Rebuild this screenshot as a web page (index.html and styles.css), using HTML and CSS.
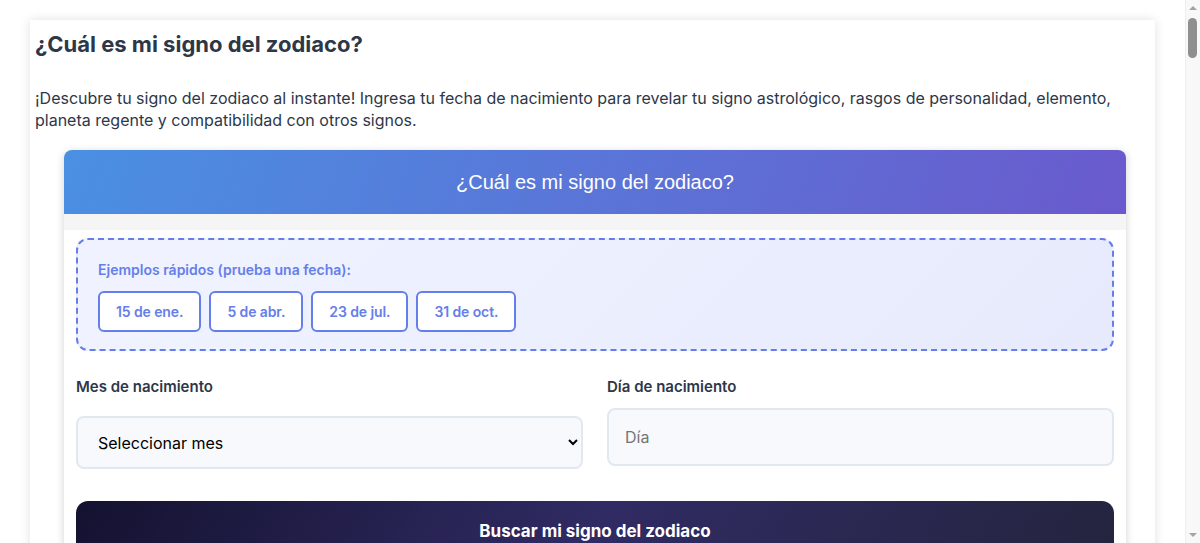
FILE: index.html
```html
<!DOCTYPE html>
<html lang="es">
<head>
    <meta charset="UTF-8">
    <meta name="viewport" content="width=device-width, initial-scale=1.0">
    <title>¿Cuál es mi signo del zodiaco?</title>
    <link rel="stylesheet" href="styles.css">
</head>
<body>
    <div class="page">
        <h1 class="page-title">¿Cuál es mi signo del zodiaco?</h1>
        <p class="intro">¡Descubre tu signo del zodiaco al instante! Ingresa tu fecha de nacimiento para revelar tu signo astrológico, rasgos de personalidad, elemento, planeta regente y compatibilidad con otros signos.</p>

        <div class="widget">
            <div class="widget-header">¿Cuál es mi signo del zodiaco?</div>
            <div class="widget-strip"></div>
            <div class="widget-body">
                <div class="examples">
                    <div class="examples-label">Ejemplos rápidos (prueba una fecha):</div>
                    <div class="examples-list">
                        <button class="chip">15 de ene.</button>
                        <button class="chip">5 de abr.</button>
                        <button class="chip">23 de jul.</button>
                        <button class="chip">31 de oct.</button>
                    </div>
                </div>

                <div class="form-row">
                    <div class="field">
                        <label class="field-label" for="month">Mes de nacimiento</label>
                        <select id="month" class="select">
                            <option>Seleccionar mes</option>
                            <option>Enero</option>
                            <option>Febrero</option>
                            <option>Marzo</option>
                        </select>
                    </div>
                    <div class="field">
                        <label class="field-label" for="day">Día de nacimiento</label>
                        <input id="day" class="input" type="number" placeholder="Día">
                    </div>
                </div>

                <button class="submit">Buscar mi signo del zodiaco</button>

                <div class="result">
                    <p>Selecciona tu mes y día de nacimiento para ver tu signo.</p>
                </div>
            </div>
        </div>
    </div>

    <!-- browser scrollbar as it shows in the capture -->
    <div class="scrollbar">
        <span class="scroll-arrow up"></span>
        <span class="scroll-thumb"></span>
        <span class="scroll-arrow down"></span>
    </div>
</body>
</html>
```

FILE: styles.css
```css
body {
    margin: 0;
    background: #ffffff;
    font-family: Inter, "Noto Sans", sans-serif;
    color: #2d3748;
}

.page {
    margin: 20px 45px 40px 30px;
    padding: 5px 5px 30px;
    background: #fff;
    box-shadow: 0 0 10px rgba(0, 0, 0, 0.12);
}

.page-title {
    font-size: 22px;
    font-weight: 700;
    margin: 5px 0 0;
    line-height: 28px;
}

.intro {
    font-size: 16px;
    line-height: 22px;
    margin: 29px 0 0;
}

.widget {
    width: 1062px;
    margin: 19px 0 0 29px;
    border-radius: 8px;
    overflow: hidden;
    background: #fff;
    box-shadow: 0 2px 8px rgba(0, 0, 0, 0.18);
}

.widget-header {
    height: 64px;
    display: flex;
    align-items: center;
    justify-content: center;
    background: linear-gradient(110deg, #4a90e2 0%, #6a5acd 100%);
    color: #fff;
    font-family: "Liberation Sans", Arial, sans-serif;
    font-size: 20px;
}

.widget-strip {
    height: 16px;
    background: #f5f5f5;
}

.widget-body {
    padding: 8px 12px 30px;
}

.examples {
    border: 2px dashed #667eea;
    border-radius: 12px;
    background: linear-gradient(135deg, #f0f3ff 0%, #e7eafc 100%);
    padding: 20px 20px 17px;
}

.examples-label {
    font-size: 14px;
    font-weight: 600;
    color: #667eea;
    line-height: 20px;
}

.examples-list {
    display: flex;
    gap: 8px;
    margin-top: 11px;
}

.chip {
    height: 41px;
    padding: 0 16px;
    border: 2px solid #667eea;
    border-radius: 6px;
    background: #fff;
    color: #667eea;
    font-family: Inter, sans-serif;
    font-size: 14px;
    font-weight: 600;
    letter-spacing: -0.1px;
}

.form-row {
    display: grid;
    grid-template-columns: 1fr 1fr;
    gap: 24px;
    margin-top: 26px;
}

.field {
    display: flex;
    flex-direction: column;
}

.field-label {
    font-size: 15px;
    font-weight: 600;
    color: #2d3748;
    line-height: 20px;
    margin-bottom: 11px;
}

.select {
    margin-top: 8px;
    height: 53px;
    padding: 0 14px 0 16px;
    border: 2px solid #e2e8f0;
    border-radius: 8px;
    background: #f7f9fc;
    font-family: Inter, sans-serif;
    font-size: 16px;
    color: #000;
}

.input {
    height: 58px;
    box-sizing: border-box;
    padding: 0 16px;
    border: 2px solid #e2e8f0;
    border-radius: 8px;
    background: #f7f9fc;
    font-family: Inter, sans-serif;
    font-size: 16px;
}

.input::placeholder {
    color: #757575;
}

.submit {
    display: block;
    width: 100%;
    height: 60px;
    margin-top: 32px;
    border: none;
    border-radius: 12px;
    background: linear-gradient(120deg, #141230 0%, #302b63 50%, #24243e 100%);
    color: #fff;
    font-family: Inter, sans-serif;
    font-size: 17px;
    font-weight: 700;
}

.result {
    margin-top: 24px;
    padding: 20px;
    border-radius: 8px;
    background: #f7f9fc;
    font-size: 15px;
}

.scrollbar {
    position: fixed;
    top: 0;
    right: 0;
    width: 15px;
    height: 100vh;
    background: #f8f8f8;
    border-left: 1px solid #eeeeee;
    box-sizing: border-box;
}

.scroll-arrow {
    position: absolute;
    left: 3px;
    width: 0;
    height: 0;
    border-left: 4px solid transparent;
    border-right: 4px solid transparent;
}

.scroll-arrow.up {
    top: 6px;
    border-bottom: 4px solid #a3a3a3;
}

.scroll-arrow.down {
    bottom: 6px;
    border-top: 4px solid #a3a3a3;
}

.scroll-thumb {
    position: absolute;
    left: 2px;
    top: 18px;
    width: 9px;
    height: 40px;
    border-radius: 5px;
    background: #8f8f8f;
}
```
